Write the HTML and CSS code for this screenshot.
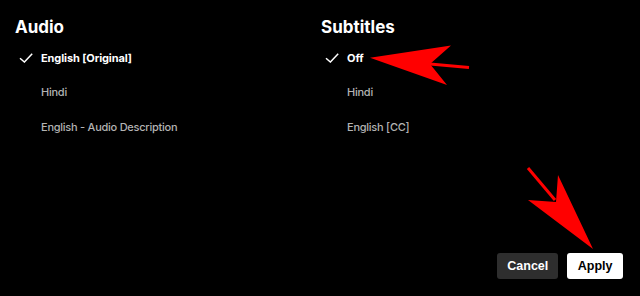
FILE: index.html
```html
<!DOCTYPE html>
<html>
<head>
<meta charset="utf-8">
<link rel="stylesheet" href="styles.css">
</head>
<body>
<div class="panel">
  <div class="columns">
    <section class="col col-audio">
      <h2 class="heading">Audio</h2>
      <ul class="options">
        <li class="option selected">
          <svg class="check" width="14" height="10" viewBox="0 0 14 10"><path d="M1 5.2 L5.4 9 L13.2 0.8" fill="none" stroke="#fff" stroke-width="1.5"/></svg>
          <span>English [Original]</span>
        </li>
        <li class="option"><span>Hindi</span></li>
        <li class="option"><span>English - Audio Description</span></li>
      </ul>
    </section>
    <section class="col col-subs">
      <h2 class="heading">Subtitles</h2>
      <ul class="options">
        <li class="option selected">
          <svg class="check" width="14" height="10" viewBox="0 0 14 10"><path d="M1 5.2 L5.4 9 L13.2 0.8" fill="none" stroke="#fff" stroke-width="1.5"/></svg>
          <span>Off</span>
        </li>
        <li class="option"><span>Hindi</span></li>
        <li class="option"><span>English [CC]</span></li>
      </ul>
    </section>
  </div>
  <div class="footer">
    <button class="btn btn-cancel">Cancel</button>
    <button class="btn btn-apply">Apply</button>
  </div>
  <svg class="annotations" width="640" height="296" viewBox="0 0 640 296">
    <line x1="430" y1="64" x2="469" y2="67.5" stroke="#f00" stroke-width="3"/>
    <polygon points="370,57.7 451,45.5 430,64 447,85" fill="#f00"/>
    <line x1="528" y1="168" x2="555" y2="200" stroke="#f00" stroke-width="3"/>
    <polygon points="593,249 558,175 556,202 528,200" fill="#f00"/>
  </svg>
</div>
</body>
</html>
```
FILE: styles.css
```css
html, body {
  margin: 0;
  padding: 0;
  background: #000;
}
.panel {
  position: relative;
  width: 640px;
  height: 296px;
  display: flex;
  flex-direction: column;
  font-family: "Inter", "Noto Sans", sans-serif;
  color: #fff;
  overflow: hidden;
}
.columns {
  display: grid;
  grid-template-columns: 306px 1fr;
  padding: 15.5px 0 0 15px;
}
.heading {
  margin: 0;
  font-size: 17px;
  line-height: 22px;
  font-weight: 700;
  letter-spacing: 0;
}
.options {
  list-style: none;
  margin: 3px 0 0 0;
  padding: 0;
}
.option {
  position: relative;
  height: 34.5px;
  display: flex;
  align-items: center;
  padding-left: 26px;
  font-size: 11px;
  letter-spacing: -0.25px;
  color: #b3b3b3;
  font-weight: 500;
}
.option.selected {
  color: #fff;
  font-weight: 700;
  letter-spacing: -0.1px;
}
.check {
  position: absolute;
  left: 4px;
  top: 12px;
}
.footer {
  margin-top: auto;
  display: flex;
  justify-content: flex-end;
  gap: 9px;
  padding: 0 17px 17px 0;
}
.btn {
  font-family: "Liberation Sans", Arial, sans-serif;
  font-weight: 700;
  font-size: 12.5px;
  height: 26px;
  border: none;
  border-radius: 3px;
  padding: 0 10px;
}
.btn-cancel {
  background: #2e2e2e;
  color: #fff;
}
.btn-apply {
  background: #fff;
  color: #000;
  padding: 0 10.5px;
}
.annotations {
  position: absolute;
  left: 0;
  top: 0;
  pointer-events: none;
}
```
